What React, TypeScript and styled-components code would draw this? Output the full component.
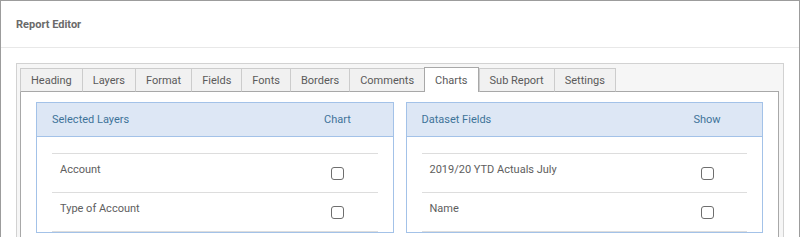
import React, { useState } from 'react'
import styled, { createGlobalStyle } from 'styled-components'

const GlobalStyle = createGlobalStyle`
  html, body {
    margin: 0;
    padding: 0;
    background: #ffffff;
    font-family: Roboto, 'Liberation Sans', Arial, sans-serif;
  }
`

const Window = styled.div`
  width: 800px;
  min-height: 320px;
  box-sizing: border-box;
  border: 1px solid #9c9c9c;
  border-bottom: none;
  background: #ffffff;
`

const Header = styled.div`
  height: 46px;
  display: flex;
  align-items: center;
  padding: 0 15px;
  border-bottom: 1px solid #e8e8e8;
  font-size: 11px;
  font-weight: 700;
  color: #6a6a6a;
`

const Body = styled.div`
  padding: 15px 15px 0 15px;
`

const TabBox = styled.div`
  border: 1px solid #d2d2d2;
  background: #f6f6f6;
  padding: 4px 4px 0 3px;
`

const TabList = styled.div`
  display: flex;
  height: 24px;
`

interface TabProps {
  active: boolean
}

const Tab = styled.div<TabProps>`
  box-sizing: border-box;
  height: ${({ active }) => (active ? '25px' : '24px')};
  margin-top: ${({ active }) => (active ? '-1px' : '0')};
  padding: 0 10px;
  display: flex;
  align-items: center;
  font-size: 11px;
  color: #5a5a5a;
  cursor: pointer;
  background: ${({ active }) => (active ? '#ffffff' : '#f1f1f1')};
  border: 1px solid #cccccc;
  border-top-color: ${({ active }) => (active ? '#a8a8a8' : '#cccccc')};
  border-left: ${({ active }) => (active ? '1px solid #a8a8a8' : '1px solid #cccccc')};
  border-right: ${({ active }) => (active ? '1px solid #a8a8a8' : 'none')};
  border-bottom: ${({ active }) => (active ? 'none' : '1px solid #a8a8a8')};
  position: relative;
  z-index: ${({ active }) => (active ? 1 : 0)};

  &:last-child {
    border-right: 1px solid #cccccc;
  }
`

const Panel = styled.div`
  margin-top: -1px;
  border: 1px solid #a8a8a8;
  background: #ffffff;
  padding: 10px 15px 20px 15px;
  display: grid;
  grid-template-columns: 1fr 1fr;
  gap: 12px;
`

const Card = styled.div`
  border: 1px solid #a3c2e8;
  background: #ffffff;
`

const CardHeader = styled.div`
  height: 33px;
  display: grid;
  grid-template-columns: 1fr 80px;
  align-items: center;
  padding: 0 15px;
  background: #dde7f5;
  border-bottom: 1px solid #a3c2e8;
  font-size: 11px;
  color: #3d7399;
`

const HeadCol = styled.div`
  text-align: center;
`

const List = styled.div`
  margin: 16px 15px 0 15px;
  border-bottom: 1px solid #dddddd;
`

const Row = styled.div`
  display: grid;
  grid-template-columns: 1fr 80px;
  min-height: 38px;
  border-top: 1px solid #dddddd;
`

const Label = styled.div`
  padding: 7px 8px 9px 8px;
  line-height: 17px;
  font-size: 11px;
  color: #5e5e5e;
  align-self: start;
`

const CheckCell = styled.div`
  display: flex;
  align-items: center;
  justify-content: center;
`

const Check = styled.input`
  appearance: none;
  -webkit-appearance: none;
  margin: 1px 0 0 0;
  width: 13px;
  height: 13px;
  box-sizing: border-box;
  border: 1px solid #6e6e6e;
  border-radius: 3px;
  background: #ffffff;
  cursor: pointer;

  &:checked {
    background: #3d7399;
    border-color: #3d7399;
  }
`

const tabs = [
  'Heading',
  'Layers',
  'Format',
  'Fields',
  'Fonts',
  'Borders',
  'Comments',
  'Charts',
  'Sub Report',
  'Settings',
]

const layers = ['Account', 'Type of Account']
const fields = ['2019/20 YTD Actuals July', 'Name']

interface ListCardProps {
  title: string
  column: string
  items: string[]
}

const ListCard = ({ title, column, items }: ListCardProps) => {
  const [checked, setChecked] = useState<Record<string, boolean>>({})

  return (
    <Card>
      <CardHeader>
        <div>{title}</div>
        <HeadCol>{column}</HeadCol>
      </CardHeader>
      <List>
        {items.map((item) => (
          <Row key={item}>
            <Label>{item}</Label>
            <CheckCell>
              <Check
                type="checkbox"
                checked={!!checked[item]}
                onChange={() => setChecked({ ...checked, [item]: !checked[item] })}
              />
            </CheckCell>
          </Row>
        ))}
      </List>
    </Card>
  )
}

const App = () => {
  const [activeTab, setActiveTab] = useState('Charts')

  return (
    <>
      <GlobalStyle />
      <Window>
        <Header>Report Editor</Header>
        <Body>
          <TabBox>
            <TabList>
              {tabs.map((tab) => (
                <Tab key={tab} active={tab === activeTab} onClick={() => setActiveTab(tab)}>
                  {tab}
                </Tab>
              ))}
            </TabList>
            <Panel>
              <ListCard title="Selected Layers" column="Chart" items={layers} />
              <ListCard title="Dataset Fields" column="Show" items={fields} />
            </Panel>
          </TabBox>
        </Body>
      </Window>
    </>
  )
}

export default App
